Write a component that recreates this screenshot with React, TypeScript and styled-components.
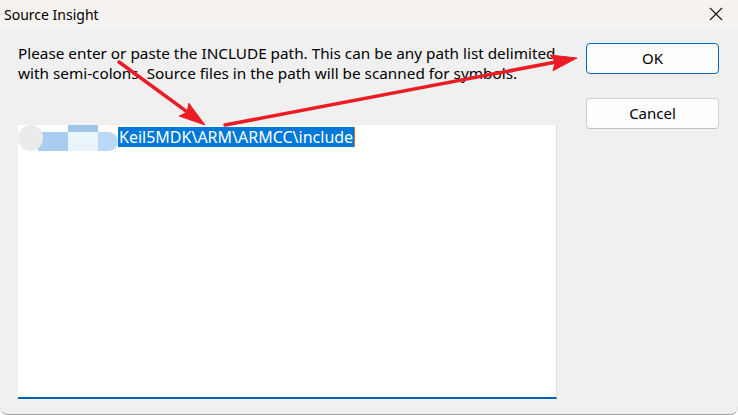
import React from 'react'
import styled, { createGlobalStyle } from 'styled-components'

const Global = createGlobalStyle`
  html, body {
    margin: 0;
    padding: 0;
    background: #ffffff;
  }
`

const uiFont = `"Noto Sans", "Open Sans", "DejaVu Sans", sans-serif`

const Window = styled.div`
  position: relative;
  width: 738px;
  height: 415px;
  box-sizing: border-box;
  background: #f0f0f0;
  border-bottom: 1px solid #a0a0a0;
  border-radius: 0 0 8px 8px;
  overflow: hidden;
  font-family: ${uiFont};
  color: #000;
  display: flex;
  flex-direction: column;
`

const TitleBar = styled.div`
  height: 28px;
  flex: none;
  background: #f6f2ef;
  display: flex;
  align-items: center;
  justify-content: space-between;
  padding-left: 4px;
  font-size: 14px;
`

const CloseButton = styled.div`
  width: 40px;
  height: 28px;
  display: flex;
  align-items: center;
  justify-content: center;
  margin-right: 2px;
`

const Body = styled.div`
  flex: 1;
  display: flex;
  padding: 15px 19px 0 18px;
  gap: 29px;
`

const Main = styled.div`
  width: 539px;
  display: flex;
  flex-direction: column;
`

const Prompt = styled.p`
  margin: 0;
  font-size: 15.3px;
  line-height: 20px;
  height: 82px;
  white-space: nowrap;
`

const PathBox = styled.div`
  height: 270px;
  background: #ffffff;
  border-right: 1px solid #e0e0e0;
  border-bottom: 2px solid #0063b5;
  padding-top: 2px;
  box-sizing: content-box;
`

const PathLine = styled.div`
  display: flex;
  align-items: stretch;
  height: 20px;
`

const Mosaic = styled.div`
  position: relative;
  width: 100px;
  height: 26px;
  margin-top: -2px;
  display: flex;
`

const Segment = styled.div<{ $w: number; $overlap?: number }>`
  width: ${(p) => p.$w}px;
  margin-left: ${(p) => -(p.$overlap ?? 0)}px;
  display: flex;
  flex-direction: column;
`

const Patch = styled.div<{ $h?: number; $bg: string; $round?: string }>`
  flex: ${(p) => (p.$h ? 'none' : '1')};
  height: ${(p) => (p.$h ? `${p.$h}px` : 'auto')};
  background: ${(p) => p.$bg};
  border-radius: ${(p) => p.$round ?? '0'};
`

const Circle = styled.div`
  position: relative;
  z-index: 1;
  width: 25px;
  height: 26px;
  border-radius: 50%;
  background: #ebebeb;
`

const Selected = styled.span`
  background: #0078d7;
  color: #ffffff;
  font-size: 16px;
  line-height: 20px;
  padding: 0 1px;
  border-right: 1px solid #e07020;
`

const Side = styled.div`
  width: 133px;
  display: flex;
  flex-direction: column;
  gap: 24px;
`

const Button = styled.div<{ $primary?: boolean }>`
  height: 31px;
  box-sizing: border-box;
  background: #fdfdfd;
  border: 1px solid ${(p) => (p.$primary ? '#0067c0' : '#d0d0d0')};
  border-bottom-color: ${(p) => (p.$primary ? '#0067c0' : '#c0c0c0')};
  border-radius: 4px;
  display: flex;
  align-items: center;
  justify-content: center;
  padding-bottom: 1px;
  font-size: 15px;
`

const Annotations = styled.svg`
  position: absolute;
  left: 0;
  top: 0;
  pointer-events: none;
`

function Arrow({ x1, y1, x2, y2 }: { x1: number; y1: number; x2: number; y2: number }) {
  const dx = x2 - x1
  const dy = y2 - y1
  const len = Math.hypot(dx, dy)
  const ux = dx / len
  const uy = dy / len
  const head = 26
  const half = 8
  const bx = x2 - ux * head
  const by = y2 - uy * head
  const px = -uy
  const py = ux
  const pts = `${x2},${y2} ${bx + px * half},${by + py * half} ${bx + ux * 4},${by + uy * 4} ${bx - px * half},${by - py * half}`
  return (
    <g fill="#ec1c24" stroke="#ec1c24">
      <line x1={x1} y1={y1} x2={bx + ux * 6} y2={by + uy * 6} strokeWidth={3.5} strokeLinecap="round" />
      <polygon points={pts} strokeWidth={1} strokeLinejoin="round" />
    </g>
  )
}

export default function App() {
  return (
    <Window>
      <Global />
      <TitleBar>
        <span>Source Insight</span>
        <CloseButton>
          <svg width="14" height="14" viewBox="0 0 14 14">
            <path d="M1 1 L13 13 M13 1 L1 13" stroke="#1a1a1a" strokeWidth="1.2" />
          </svg>
        </CloseButton>
      </TitleBar>
      <Body>
        <Main>
          <Prompt>
            Please enter or paste the INCLUDE path. This can be any path list delimited
            <br />
            with semi-colons. Source files in the path will be scanned for symbols.
          </Prompt>
          <PathBox>
            <PathLine>
              <Mosaic>
                <Circle />
                <Segment $w={30} $overlap={5}>
                  <Patch $h={7} $bg="#ffffff" />
                  <Patch $bg="#a9cdf0" />
                </Segment>
                <Segment $w={30}>
                  <Patch $h={7} $bg="#9fc6ea" />
                  <Patch $bg="#e9f4fb" />
                </Segment>
                <Segment $w={20}>
                  <Patch $h={7} $bg="#ffffff" />
                  <Patch $bg="#bad9f5" $round="0 10px 10px 0" />
                </Segment>
              </Mosaic>
              <Selected>Keil5MDK\ARM\ARMCC\include</Selected>
            </PathLine>
          </PathBox>
        </Main>
        <Side>
          <Button $primary>OK</Button>
          <Button>Cancel</Button>
        </Side>
      </Body>
      <Annotations width="738" height="415">
        <Arrow x1={119} y1={62} x2={205} y2={125} />
        <Arrow x1={225} y1={125} x2={577} y2={58} />
      </Annotations>
    </Window>
  )
}
